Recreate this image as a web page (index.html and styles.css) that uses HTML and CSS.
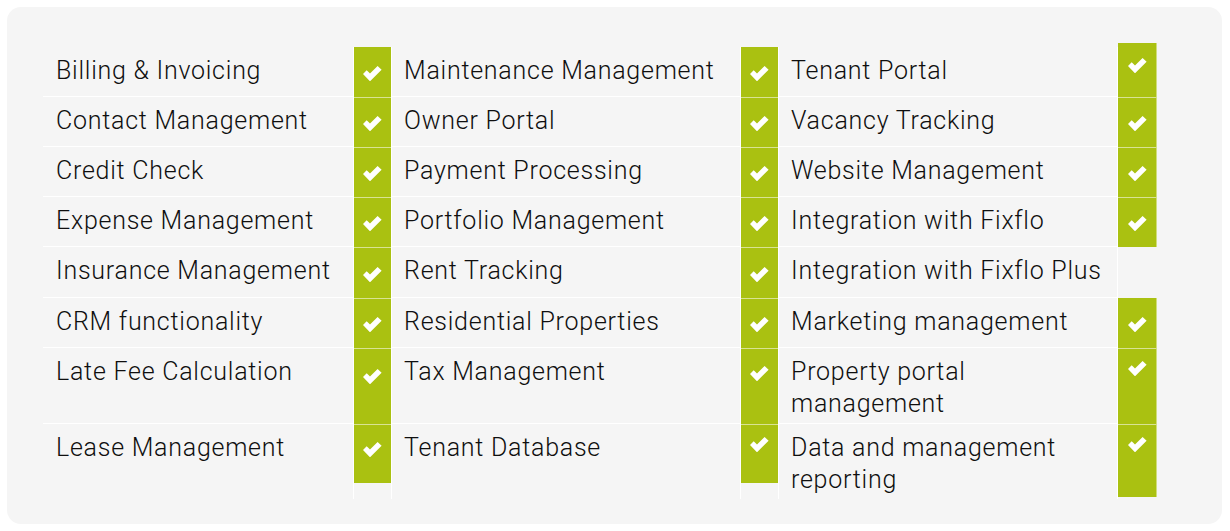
FILE: index.html
```html
<!DOCTYPE html>
<html lang="en">
<head>
<meta charset="utf-8">
<title>Features</title>
<link rel="stylesheet" href="styles.css">
</head>
<body>
<div class="card">
  <div class="grid">
    <!-- row 1 -->
    <div class="label">Billing &amp; Invoicing</div>
    <div class="check"><span class="box"><svg class="tick" viewBox="0 0 19 15"><path d="M0 8 L3.7 4.3 L7 7.6 L14.6 0 L18.6 3.7 L7 15.3 Z"/></svg></span></div>
    <div class="label mid">Maintenance Management</div>
    <div class="check"><span class="box"><svg class="tick" viewBox="0 0 19 15"><path d="M0 8 L3.7 4.3 L7 7.6 L14.6 0 L18.6 3.7 L7 15.3 Z"/></svg></span></div>
    <div class="label mid">Tenant Portal</div>
    <div class="check last"><span class="box first-top top-c"><svg class="tick" viewBox="0 0 19 15"><path d="M0 8 L3.7 4.3 L7 7.6 L14.6 0 L18.6 3.7 L7 15.3 Z"/></svg></span></div>
    <!-- row 2 -->
    <div class="label">Contact Management</div>
    <div class="check"><span class="box"><svg class="tick" viewBox="0 0 19 15"><path d="M0 8 L3.7 4.3 L7 7.6 L14.6 0 L18.6 3.7 L7 15.3 Z"/></svg></span></div>
    <div class="label mid">Owner Portal</div>
    <div class="check"><span class="box"><svg class="tick" viewBox="0 0 19 15"><path d="M0 8 L3.7 4.3 L7 7.6 L14.6 0 L18.6 3.7 L7 15.3 Z"/></svg></span></div>
    <div class="label mid">Vacancy Tracking</div>
    <div class="check last"><span class="box"><svg class="tick" viewBox="0 0 19 15"><path d="M0 8 L3.7 4.3 L7 7.6 L14.6 0 L18.6 3.7 L7 15.3 Z"/></svg></span></div>
    <!-- row 3 -->
    <div class="label">Credit Check</div>
    <div class="check"><span class="box"><svg class="tick" viewBox="0 0 19 15"><path d="M0 8 L3.7 4.3 L7 7.6 L14.6 0 L18.6 3.7 L7 15.3 Z"/></svg></span></div>
    <div class="label mid">Payment Processing</div>
    <div class="check"><span class="box"><svg class="tick" viewBox="0 0 19 15"><path d="M0 8 L3.7 4.3 L7 7.6 L14.6 0 L18.6 3.7 L7 15.3 Z"/></svg></span></div>
    <div class="label mid">Website Management</div>
    <div class="check last"><span class="box"><svg class="tick" viewBox="0 0 19 15"><path d="M0 8 L3.7 4.3 L7 7.6 L14.6 0 L18.6 3.7 L7 15.3 Z"/></svg></span></div>
    <!-- row 4 -->
    <div class="label">Expense Management</div>
    <div class="check"><span class="box"><svg class="tick" viewBox="0 0 19 15"><path d="M0 8 L3.7 4.3 L7 7.6 L14.6 0 L18.6 3.7 L7 15.3 Z"/></svg></span></div>
    <div class="label mid">Portfolio Management</div>
    <div class="check"><span class="box"><svg class="tick" viewBox="0 0 19 15"><path d="M0 8 L3.7 4.3 L7 7.6 L14.6 0 L18.6 3.7 L7 15.3 Z"/></svg></span></div>
    <div class="label mid">Integration with Fixflo</div>
    <div class="check last"><span class="box"><svg class="tick" viewBox="0 0 19 15"><path d="M0 8 L3.7 4.3 L7 7.6 L14.6 0 L18.6 3.7 L7 15.3 Z"/></svg></span></div>
    <!-- row 5 -->
    <div class="label">Insurance Management</div>
    <div class="check"><span class="box"><svg class="tick" viewBox="0 0 19 15"><path d="M0 8 L3.7 4.3 L7 7.6 L14.6 0 L18.6 3.7 L7 15.3 Z"/></svg></span></div>
    <div class="label mid">Rent Tracking</div>
    <div class="check"><span class="box"><svg class="tick" viewBox="0 0 19 15"><path d="M0 8 L3.7 4.3 L7 7.6 L14.6 0 L18.6 3.7 L7 15.3 Z"/></svg></span></div>
    <div class="label mid">Integration with Fixflo Plus</div>
    <div class="check last"></div>
    <!-- row 6 -->
    <div class="label">CRM functionality</div>
    <div class="check"><span class="box"><svg class="tick" viewBox="0 0 19 15"><path d="M0 8 L3.7 4.3 L7 7.6 L14.6 0 L18.6 3.7 L7 15.3 Z"/></svg></span></div>
    <div class="label mid">Residential Properties</div>
    <div class="check"><span class="box"><svg class="tick" viewBox="0 0 19 15"><path d="M0 8 L3.7 4.3 L7 7.6 L14.6 0 L18.6 3.7 L7 15.3 Z"/></svg></span></div>
    <div class="label mid">Marketing management</div>
    <div class="check last"><span class="box no-line"><svg class="tick" viewBox="0 0 19 15"><path d="M0 8 L3.7 4.3 L7 7.6 L14.6 0 L18.6 3.7 L7 15.3 Z"/></svg></span></div>
    <!-- row 7 -->
    <div class="label">Late Fee Calculation</div>
    <div class="check"><span class="box top-a"><svg class="tick" viewBox="0 0 19 15"><path d="M0 8 L3.7 4.3 L7 7.6 L14.6 0 L18.6 3.7 L7 15.3 Z"/></svg></span></div>
    <div class="label mid">Tax Management</div>
    <div class="check"><span class="box top-b"><svg class="tick" viewBox="0 0 19 15"><path d="M0 8 L3.7 4.3 L7 7.6 L14.6 0 L18.6 3.7 L7 15.3 Z"/></svg></span></div>
    <div class="label mid">Property portal management</div>
    <div class="check last"><span class="box top-c"><svg class="tick" viewBox="0 0 19 15"><path d="M0 8 L3.7 4.3 L7 7.6 L14.6 0 L18.6 3.7 L7 15.3 Z"/></svg></span></div>
    <!-- row 8 -->
    <div class="label end">Lease Management</div>
    <div class="check"><span class="box short top-b"><svg class="tick" viewBox="0 0 19 15"><path d="M0 8 L3.7 4.3 L7 7.6 L14.6 0 L18.6 3.7 L7 15.3 Z"/></svg></span></div>
    <div class="label mid end">Tenant Database</div>
    <div class="check"><span class="box short top-c"><svg class="tick" viewBox="0 0 19 15"><path d="M0 8 L3.7 4.3 L7 7.6 L14.6 0 L18.6 3.7 L7 15.3 Z"/></svg></span></div>
    <div class="label mid end">Data and management reporting</div>
    <div class="check last"><span class="box tall top-c"><svg class="tick" viewBox="0 0 19 15"><path d="M0 8 L3.7 4.3 L7 7.6 L14.6 0 L18.6 3.7 L7 15.3 Z"/></svg></span></div>
  </div>
</div>
</body>
</html>
```

FILE: styles.css
```css
html, body {
  margin: 0;
  padding: 0;
  background: #ffffff;
}

body {
  padding: 7px 8px 7px 7px;
  font-family: Roboto, "Liberation Sans", Arial, sans-serif;
  color: #0f0f0f;
}

.card {
  box-sizing: border-box;
  width: 1215px;
  height: 517px;
  background: #f5f5f5;
  border-radius: 14px;
  padding: 40px 0 0 36px;
}

.grid {
  display: grid;
  grid-template-columns: 311px 37px 350px 37px 340px 39px;
  grid-template-rows: 50px 50px 50px 50px 51px 50px 76px 75px;
}

.label {
  box-sizing: border-box;
  padding: 8px 8px 0 13px;
  font-size: 25px;
  font-weight: 300;
  line-height: 32px;
  letter-spacing: 0.75px;
  border-right: 1px solid #ffffff;
  border-bottom: 1.5px solid #ffffff;
}

.label.mid {
  border-left: 1px solid #ffffff;
  padding-left: 12px;
}

.label.end {
  border-bottom: none;
}

.check {
  display: flex;
  flex-direction: column;
}

.box {
  box-sizing: border-box;
  height: 100%;
  background: #aac111;
  border-top: 1px solid rgba(255, 255, 255, 0.55);
  display: flex;
  align-items: center;
  justify-content: center;
  padding-top: 2px;
}

.check.last .box {
  border-right: 1px solid rgba(255, 255, 255, 0.45);
}

.box.no-line {
  border-top: none;
}

.box.first-top {
  margin-top: -4px;
  height: calc(100% + 4px);
  border-top: none;
}

.grid > .check:nth-child(2) .box,
.grid > .check:nth-child(4) .box {
  border-top: none;
}

.box.top-a,
.box.top-b,
.box.top-c {
  align-items: flex-start;
}

.box.top-a { padding-top: 20px; }
.box.top-b { padding-top: 17px; }
.box.top-c { padding-top: 12px; }

.box.first-top.top-c { padding-top: 15px; }

.box.short {
  height: 59px;
}

.box.tall {
  height: 73px;
}

.tick {
  width: 19px;
  height: 15px;
  fill: #ffffff;
  display: block;
}
```
